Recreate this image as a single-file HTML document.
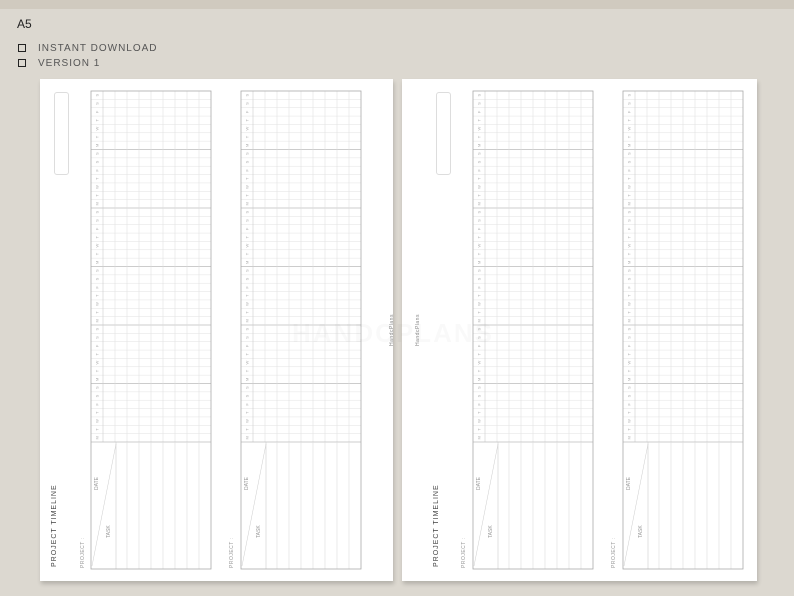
<!DOCTYPE html>
<html><head><meta charset="utf-8"><style>
body{margin:0;width:794px;height:596px;background:#dcd8d0;position:relative;overflow:hidden;font-family:"Liberation Sans",sans-serif}
.band{position:absolute;left:0;top:0;width:794px;height:9px;background:#d0cabf}
.t{position:absolute;color:#333;}
.cb{position:absolute;width:6px;height:6px;border:1.5px solid #222;}
.page{position:absolute;top:79px;height:502px;background:#fff;box-shadow:1px 3px 4px rgba(0,0,0,.18)}
.rot{position:absolute;transform-origin:0 0;transform:rotate(-90deg);white-space:nowrap}
</style></head><body>
<div class="band"></div>
<div class="t" style="left:17px;top:17px;font-size:12px;color:#222">A5</div>
<div class="cb" style="left:18px;top:44px"></div>
<div class="t" style="left:38px;top:43px;font-size:10px;letter-spacing:1px;color:#555">INSTANT DOWNLOAD</div>
<div class="cb" style="left:18px;top:59px"></div>
<div class="t" style="left:38px;top:58px;font-size:10px;letter-spacing:1px;color:#555">VERSION 1</div>
<div class="page" style="left:40px;width:353px"></div>
<div class="page" style="left:402px;width:355px"></div>
<svg id="s" width="794" height="596" style="position:absolute;left:0;top:0"></svg>
<div class="rot" style="left:51px;top:567px;font-size:7px;letter-spacing:1px;color:#444">PROJECT TIMELINE</div>
<div class="rot" style="left:433px;top:567px;font-size:7px;letter-spacing:1px;color:#444">PROJECT TIMELINE</div>
<div class="rot" style="left:80px;top:568px;font-size:5px;letter-spacing:.5px;color:#999">PROJECT :</div>
<div class="rot" style="left:229px;top:568px;font-size:5px;letter-spacing:.5px;color:#999">PROJECT :</div>
<div class="rot" style="left:461px;top:568px;font-size:5px;letter-spacing:.5px;color:#999">PROJECT :</div>
<div class="rot" style="left:611px;top:568px;font-size:5px;letter-spacing:.5px;color:#999">PROJECT :</div>
<div class="rot" style="left:94px;top:490px;font-size:5px;color:#999">DATE</div>
<div class="rot" style="left:244px;top:490px;font-size:5px;color:#999">DATE</div>
<div class="rot" style="left:476px;top:490px;font-size:5px;color:#999">DATE</div>
<div class="rot" style="left:626px;top:490px;font-size:5px;color:#999">DATE</div>
<div class="rot" style="left:106px;top:538px;font-size:5px;color:#999">TASK</div>
<div class="rot" style="left:256px;top:538px;font-size:5px;color:#999">TASK</div>
<div class="rot" style="left:488px;top:538px;font-size:5px;color:#999">TASK</div>
<div class="rot" style="left:638px;top:538px;font-size:5px;color:#999">TASK</div>
<div style="position:absolute;left:54px;top:92px;width:13px;height:81px;border:1px solid #ddd;border-radius:3px"></div>
<div style="position:absolute;left:436px;top:92px;width:13px;height:81px;border:1px solid #ddd;border-radius:3px"></div>
<div class="t" style="left:292px;top:318px;font-size:26px;font-weight:bold;letter-spacing:2px;color:rgba(0,0,0,.022)">HANDCPLANS</div>
<div class="rot" style="left:389px;top:346px;font-size:5px;color:#888;letter-spacing:.5px">HandcPlans</div>
<div class="rot" style="left:415px;top:346px;font-size:5px;color:#888;letter-spacing:.5px">HandcPlans</div>
<script>
var s=document.getElementById('s'),h='';
function L(x1,y1,x2,y2,c,w){h+='<line x1="'+x1+'" y1="'+y1+'" x2="'+x2+'" y2="'+y2+'" stroke="'+c+'" stroke-width="'+(w||0.6)+'"/>';}
var days='MTWTFSS';
[91,241,473,623].forEach(function(x0){
 var y0=91,y1=442,yb=569,rh=(y1-y0)/42;
 for(var i=1;i<42;i++){var y=y0+i*rh;L(x0,y,x0+120,y,i%7==0?'#bbb':'#e2e2e2',i%7==0?0.8:0.5);
 }
 for(var i=0;i<42;i++){var y=y0+i*rh+rh/2;h+='<text x="'+(x0+6)+'" y="'+(y+1.5)+'" font-size="4" fill="#aaa" text-anchor="middle" transform="rotate(-90 '+(x0+6)+' '+y+')">'+days[6-(i%7)]+'</text>';}
 L(x0+12,y0,x0+12,y1,'#ccc',0.6);
 for(var j=1;j<9;j++){L(x0+12+j*12,y0,x0+12+j*12,y1,'#ddd',0.5);}
 L(x0,y1,x0+120,y1,'#bbb',0.8);
 L(x0+25,y1,x0+25,yb,'#ccc',0.6);
 for(var j=1;j<8;j++){L(x0+24+j*12,y1,x0+24+j*12,yb,'#ddd',0.6);}
 L(x0+25,y1+2,x0+1,yb-3,'#ccc',0.5);
 h+='<rect x="'+x0+'" y="'+y0+'" width="120" height="'+(yb-y0)+'" fill="none" stroke="#aaa" stroke-width="0.8"/>';
});
s.innerHTML=h;
</script>
</body></html>
